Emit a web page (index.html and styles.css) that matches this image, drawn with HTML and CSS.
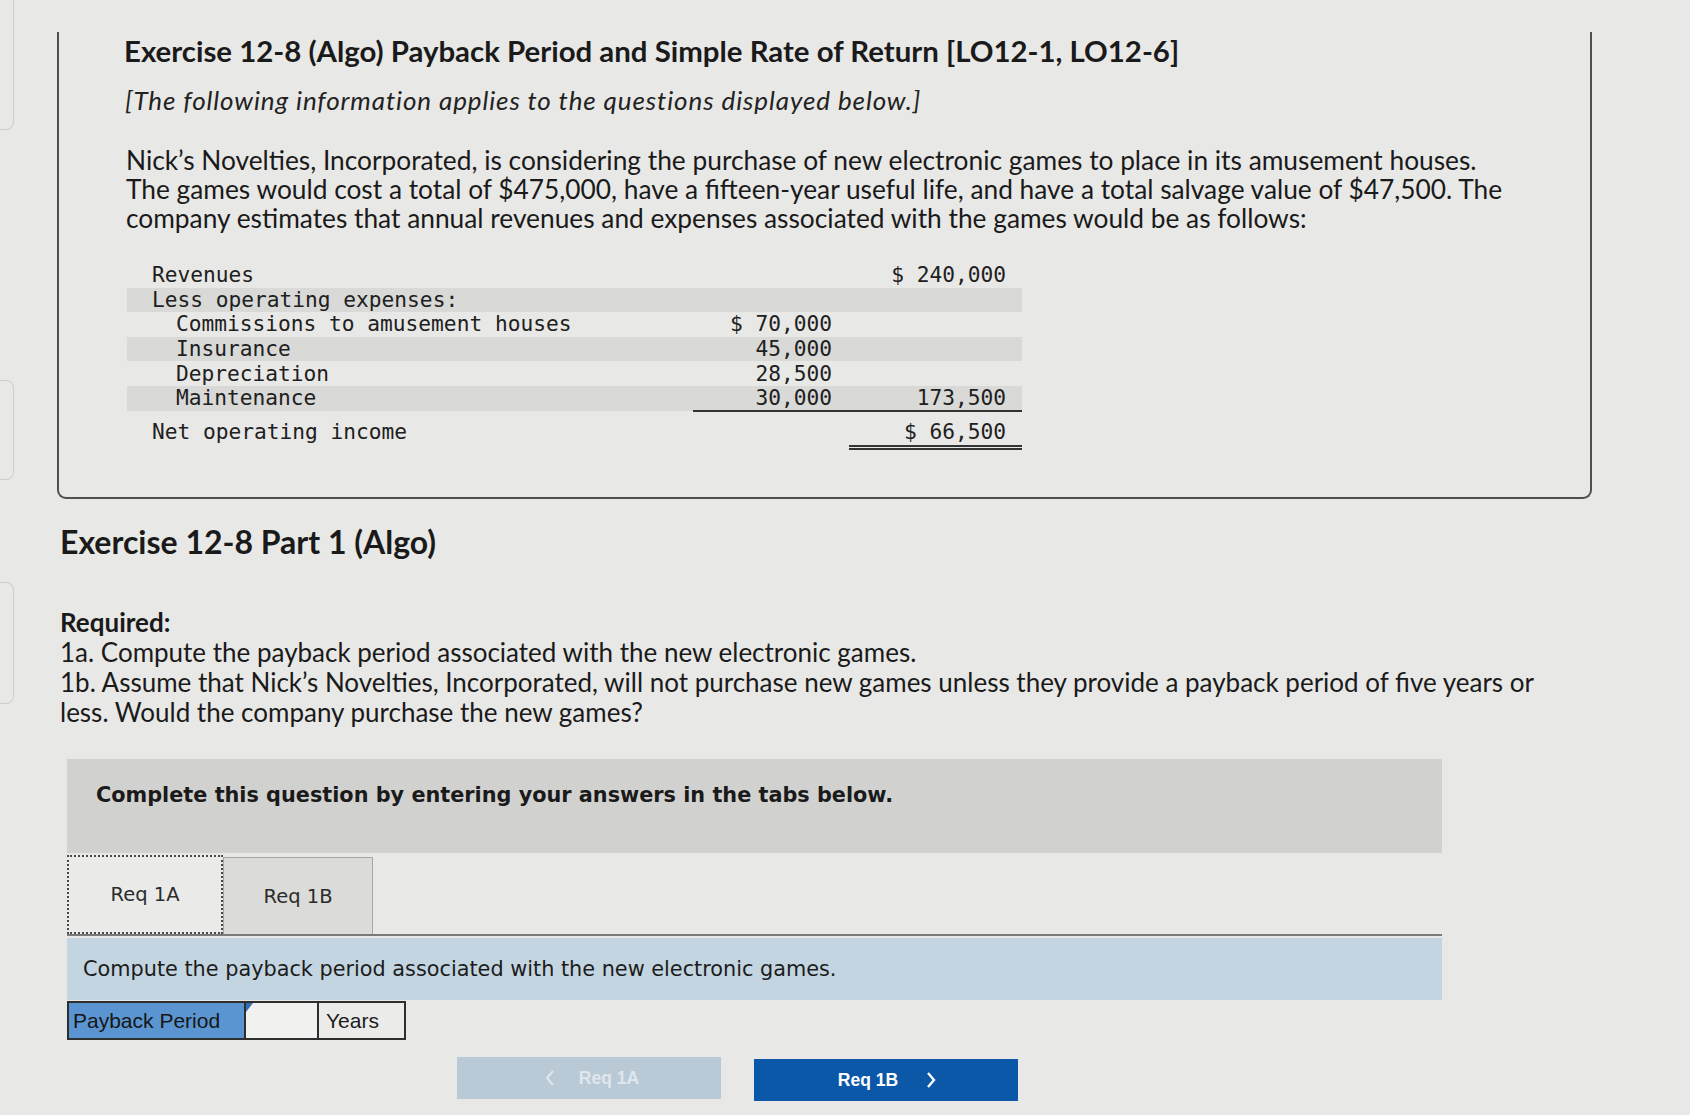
FILE: index.html
```html
<!DOCTYPE html>
<html lang="en">
<head>
<meta charset="utf-8">
<title>Exercise 12-8 (Algo)</title>
<link rel="stylesheet" href="styles.css">
</head>
<body>
<div class="screen">
  <div class="rail">
    <div class="rail-box b1"></div>
    <div class="rail-box b2"></div>
    <div class="rail-box b3"></div>
  </div>
  <div class="main">
    <section class="card">
      <h1 class="title">Exercise 12-8 (Algo) Payback Period and Simple Rate of Return [LO12-1, LO12-6]</h1>
      <p class="note">[The following information applies to the questions displayed below.]</p>
      <p class="intro">Nick’s Novelties, Incorporated, is considering the purchase of new electronic games to place in its amusement houses.<br>The games would cost a total of $475,000, have a fifteen-year useful life, and have a total salvage value of $47,500. The<br>company estimates that annual revenues and expenses associated with the games would be as follows:</p>
      <table class="fin">
        <tbody>
          <tr><td class="lab">Revenues</td><td class="amt"></td><td class="tot">$ 240,000</td></tr>
          <tr class="band"><td class="lab">Less operating expenses:</td><td class="amt"></td><td class="tot"></td></tr>
          <tr><td class="lab sub">Commissions to amusement houses</td><td class="amt">$ 70,000</td><td class="tot"></td></tr>
          <tr class="band"><td class="lab sub">Insurance</td><td class="amt">45,000</td><td class="tot"></td></tr>
          <tr><td class="lab sub">Depreciation</td><td class="amt">28,500</td><td class="tot"></td></tr>
          <tr class="band last"><td class="lab sub">Maintenance</td><td class="amt rule">30,000</td><td class="tot rule">173,500</td></tr>
          <tr class="net"><td class="lab">Net operating income</td><td class="amt"></td><td class="tot dbl">$ 66,500</td></tr>
        </tbody>
      </table>
    </section>

    <h2 class="part">Exercise 12-8 Part 1 (Algo)</h2>

    <p class="required"><b>Required:</b><br>1a. Compute the payback period associated with the new electronic games.<br>1b. Assume that Nick’s Novelties, Incorporated, will not purchase new games unless they provide a payback period of five years or<br>less. Would the company purchase the new games?</p>

    <div class="widget">
      <div class="instr">Complete this question by entering your answers in the tabs below.</div>
      <div class="tabs">
        <div class="tab active">Req 1A</div>
        <div class="tab other">Req 1B</div>
      </div>
      <div class="panel">
        <div class="prompt">Compute the payback period associated with the new electronic games.</div>
        <div class="answer-row">
          <div class="lbl">Payback Period</div>
          <div class="inp"></div>
          <div class="unit">Years</div>
        </div>
        <div class="nav">
          <div class="btn prev">
            <svg class="chev" width="10" height="18" viewBox="0 0 10 18"><polyline points="8,2 2,9 8,16" fill="none" stroke="currentColor" stroke-width="2"/></svg>
            <span>Req 1A</span>
          </div>
          <div class="btn next">
            <span>Req 1B</span>
            <svg class="chev" width="10" height="18" viewBox="0 0 10 18"><polyline points="2,2 8,9 2,16" fill="none" stroke="currentColor" stroke-width="2.4"/></svg>
          </div>
        </div>
      </div>
    </div>
  </div>
</div>
</body>
</html>
```

FILE: styles.css
```css
* { box-sizing: border-box; }

body {
  margin: 0;
  background: #e8e8e6;
  color: #1a1a1a;
  font-family: Lato, "Open Sans", sans-serif;
}

.screen {
  display: flex;
  min-height: 1115px;
  overflow: hidden;
}

.rail {
  width: 14px;
  flex: none;
  display: flex;
  flex-direction: column;
}

.rail-box {
  border: 1px solid #cdcdcb;
  border-left: none;
  border-radius: 0 8px 8px 0;
}
.rail-box.b1 { height: 140px; margin-top: -10px; }
.rail-box.b2 { height: 100px; margin-top: 250px; }
.rail-box.b3 { height: 122px; margin-top: 102px; }

.main {
  flex: 1;
  padding-left: 43px;
}

/* ---------- top card ---------- */
.card {
  margin-top: 32px;
  width: 1535px;
  border: 2px solid #4f4f4f;
  border-top: none;
  border-radius: 0 0 9px 9px;
  padding: 2px 0 47px 65px;
}

.title {
  margin: 0;
  font-size: 29.4px;
  line-height: 34px;
  font-weight: 700;
}

.note {
  margin: 17px 0 0 1px;
  font-size: 26px;
  line-height: 30px;
  font-style: italic;
  font-weight: 400;
  letter-spacing: 0.9px;
  color: #222;
}

.intro {
  margin: 31px 0 0 2px;
  font-size: 26.3px;
  line-height: 29px;
  white-space: nowrap;
}

.fin {
  margin: 30px 0 0 3px;
  border-collapse: collapse;
  font-family: "DejaVu Sans Mono", "Liberation Mono", monospace;
  font-size: 21.2px;
  line-height: 24px;
  color: #202020;
}
.fin td {
  padding: 0;
  height: 24.6px;
  white-space: pre;
}
.fin .lab { width: 566px; padding-left: 25px; }
.fin .lab.sub { padding-left: 49px; }
.fin .amt { width: 156px; text-align: right; padding-right: 17px; }
.fin .tot { width: 173px; text-align: right; padding-right: 16px; }
.fin .band td { background: #d9d9d7; }
.fin .rule { border-bottom: 2px solid #333; }
.fin .net td { height: 37px; padding-top: 6px; }
.fin .dbl { border-bottom: 5px double #333; }

/* ---------- part heading ---------- */
.part {
  margin: 25px 0 0 3px;
  font-size: 32px;
  line-height: 36px;
  font-weight: 700;
}

.required {
  margin: 47px 0 0 3px;
  font-size: 26px;
  line-height: 30px;
  white-space: nowrap;
}
.required b { font-weight: 700; }

/* ---------- answer widget ---------- */
.widget {
  margin: 32px 0 0 10px;
  width: 1375px;
  font-family: "DejaVu Sans", Verdana, sans-serif;
}

.instr {
  background: #d1d1cf;
  height: 94px;
  padding: 23px 0 0 29px;
  font-size: 20.8px;
  line-height: 26px;
  font-weight: 700;
  color: #1a1a1a;
}

.tabs {
  margin-top: 2px;
  display: flex;
  align-items: flex-end;
  height: 79px;
}

.tab {
  display: flex;
  align-items: center;
  justify-content: center;
  font-size: 19.5px;
  color: #2b2b2b;
}
.tab.active {
  width: 156px;
  height: 79px;
  border: 2px dotted #4a4a4a;
  background: #eaeae9;
}
.tab.other {
  width: 150px;
  height: 77px;
  border: 1px solid #a6a6a4;
  border-bottom: none;
  background: #dbdbd9;
}

.panel {
  border-top: 2px solid #7a7a7a;
  padding-top: 2px;
}

.prompt {
  background: #c3d5e0;
  height: 62px;
  padding-left: 16px;
  display: flex;
  align-items: center;
  font-size: 20.8px;
  color: #1c1c1c;
}

.answer-row {
  margin-top: 1px;
  display: inline-flex;
  height: 39px;
  border: 2px solid #2e2e2e;
  font-family: "Liberation Sans", Arial, sans-serif;
  font-size: 21px;
}
.lbl {
  width: 175px;
  background: #5b95d1;
  padding-left: 4px;
  display: flex;
  align-items: center;
  color: #161616;
}
.inp {
  position: relative;
  width: 75px;
  background: #f1f1f0;
  border-left: 2px solid #2e2e2e;
  border-right: 2px solid #2e2e2e;
}
.inp::before {
  content: "";
  position: absolute;
  left: 0;
  top: 0;
  border-top: 9px solid #2f6fb8;
  border-right: 7px solid transparent;
}
.unit {
  width: 85px;
  background: #ebebea;
  padding-left: 7px;
  display: flex;
  align-items: center;
  color: #1c1c1c;
}

.nav {
  display: flex;
  gap: 33px;
  padding-left: 390px;
  margin-top: 17px;
}
.btn {
  width: 264px;
  height: 42px;
  display: flex;
  align-items: center;
  justify-content: center;
  font-family: "Liberation Sans", Arial, sans-serif;
  font-weight: 700;
  font-size: 17.5px;
}
.btn.prev {
  background: #b9c9d6;
  color: #dfe7ee;
  gap: 24px;
  padding-left: 6px;
}
.btn.next {
  background: #0b58a8;
  color: #ffffff;
  gap: 28px;
  padding-left: 2px;
  margin-top: 2px;
}
```
